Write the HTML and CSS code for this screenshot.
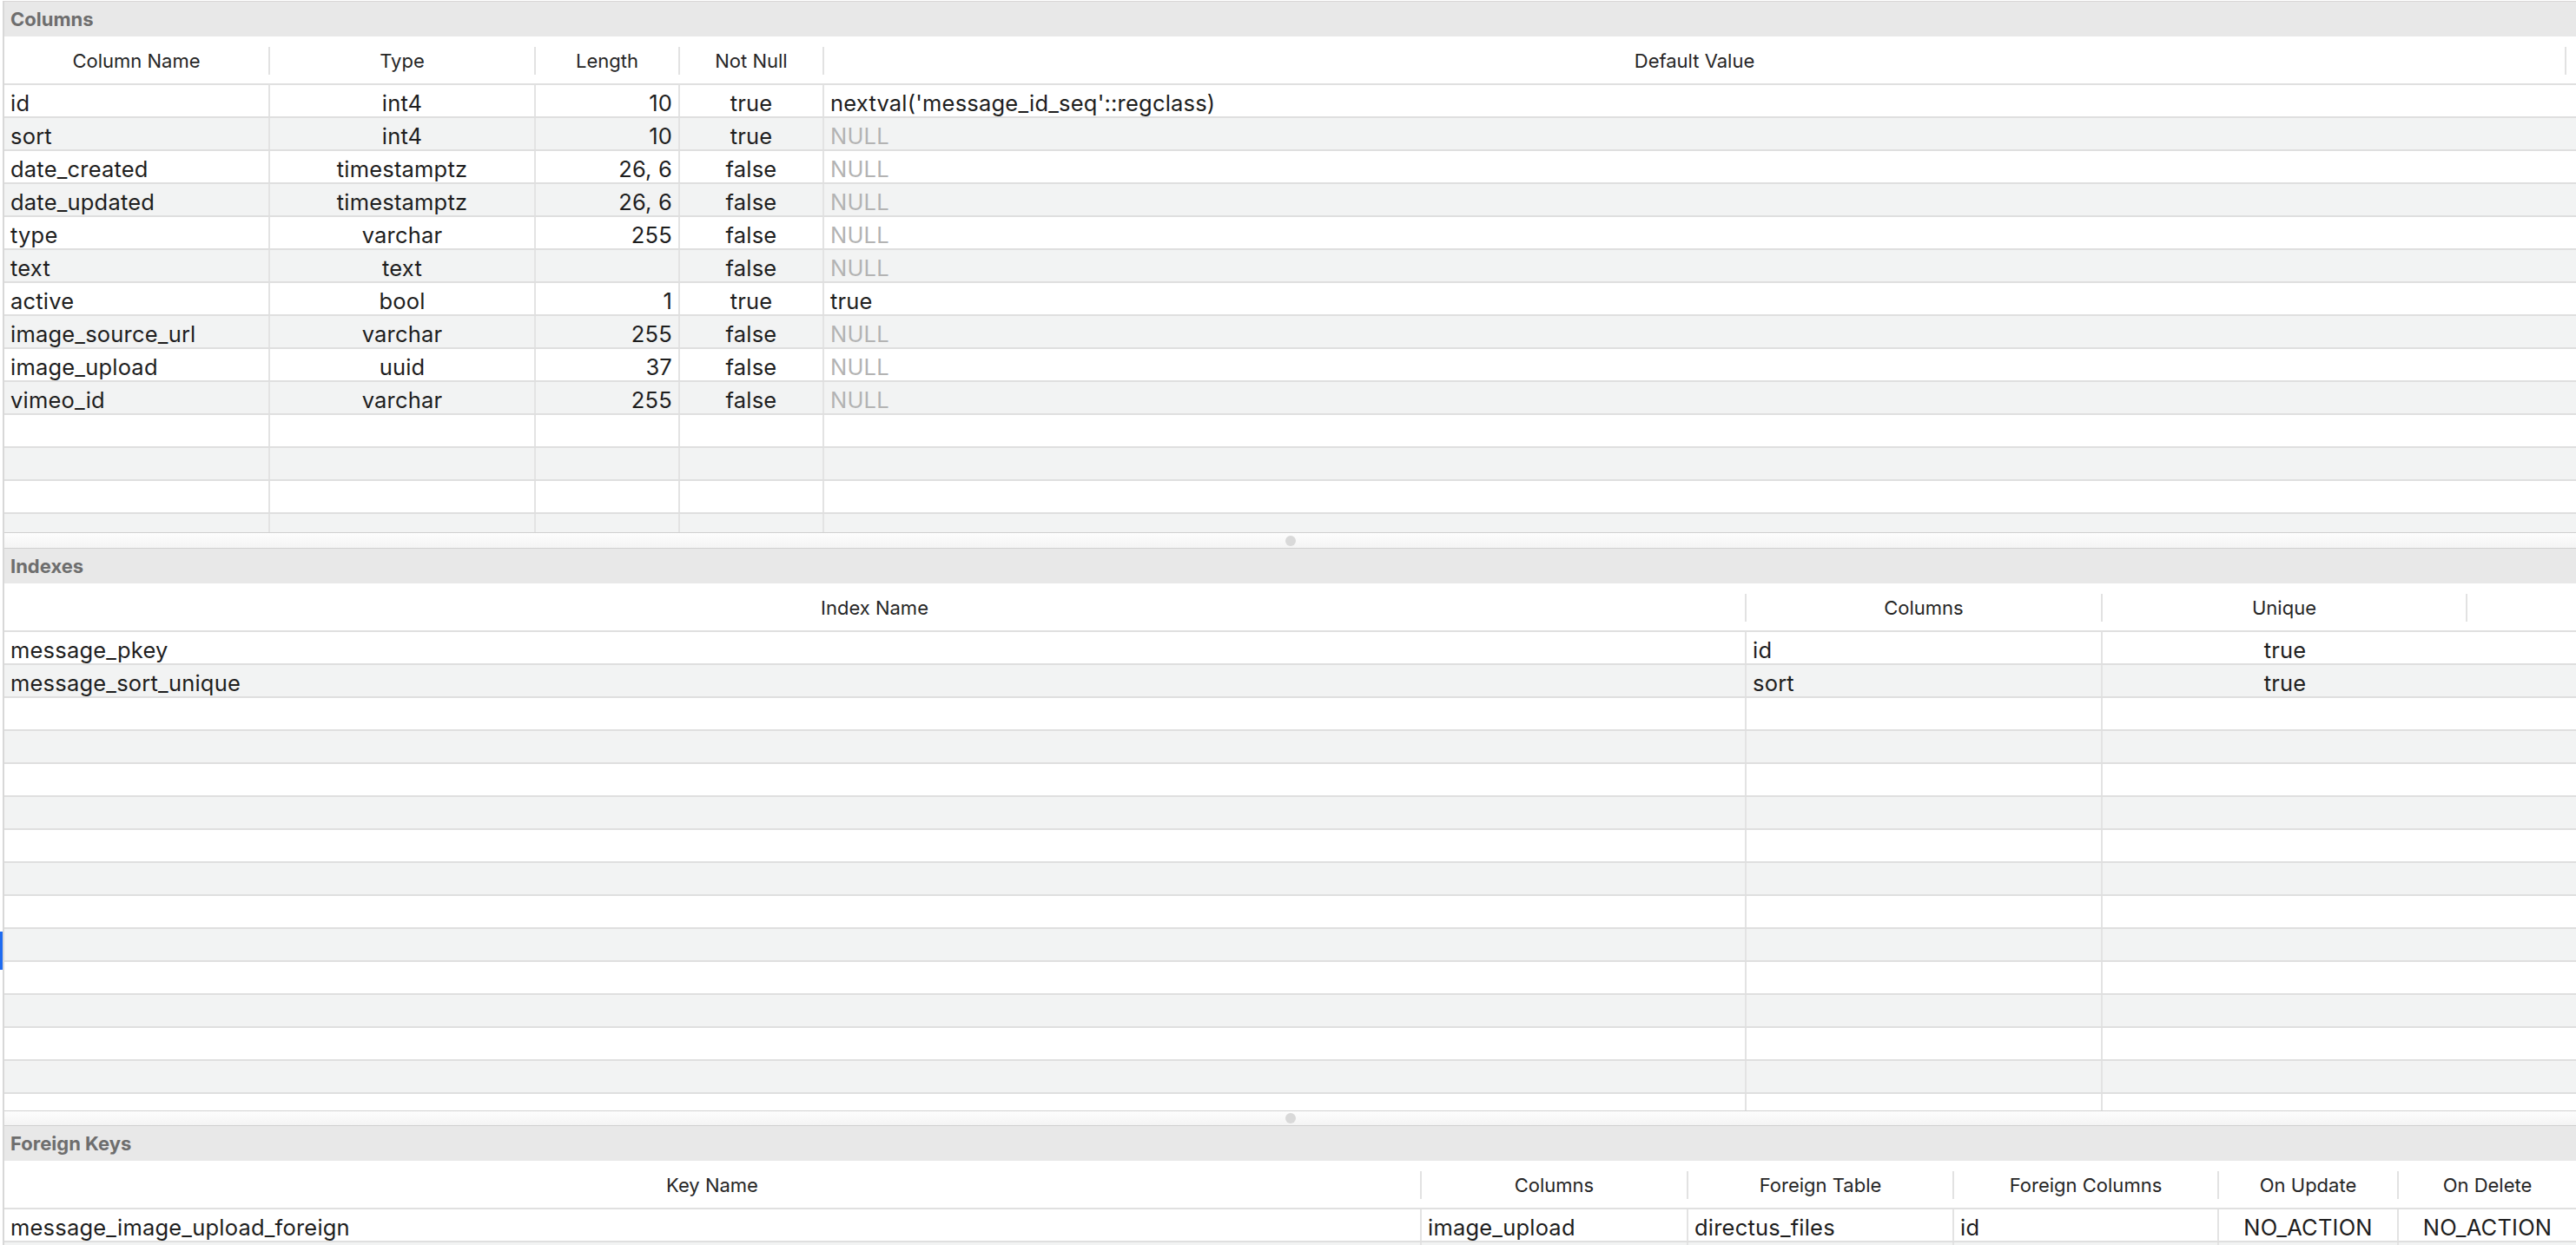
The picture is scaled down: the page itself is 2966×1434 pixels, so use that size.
FILE: index.html
```html
<!DOCTYPE html>
<html lang="en">
<head>
<meta charset="utf-8">
<title>message — Structure</title>
<link rel="stylesheet" href="styles.css">
</head>
<body>
<div class="caret"></div>
<div class="window">

  <section class="pane">
    <div class="pane-title">Columns</div>
    <div class="grid grid-columns">
      <div class="hrow">
        <div class="hc cw1">Column Name</div>
        <div class="hc cw2">Type</div>
        <div class="hc cw3">Length</div>
        <div class="hc cw4">Not Null</div>
        <div class="hc cw5">Default Value</div>
        <div class="hfill"></div>
      </div>
      <div class="rows">
        <div class="row"><div class="c cw1">id</div><div class="c cw2 ctr">int4</div><div class="c cw3 rgt">10</div><div class="c cw4 ctr">true</div><div class="c fill">nextval('message_id_seq'::regclass)</div></div>
        <div class="row"><div class="c cw1">sort</div><div class="c cw2 ctr">int4</div><div class="c cw3 rgt">10</div><div class="c cw4 ctr">true</div><div class="c fill null">NULL</div></div>
        <div class="row"><div class="c cw1">date_created</div><div class="c cw2 ctr">timestamptz</div><div class="c cw3 rgt">26, 6</div><div class="c cw4 ctr">false</div><div class="c fill null">NULL</div></div>
        <div class="row"><div class="c cw1">date_updated</div><div class="c cw2 ctr">timestamptz</div><div class="c cw3 rgt">26, 6</div><div class="c cw4 ctr">false</div><div class="c fill null">NULL</div></div>
        <div class="row"><div class="c cw1">type</div><div class="c cw2 ctr">varchar</div><div class="c cw3 rgt">255</div><div class="c cw4 ctr">false</div><div class="c fill null">NULL</div></div>
        <div class="row"><div class="c cw1">text</div><div class="c cw2 ctr">text</div><div class="c cw3 rgt"></div><div class="c cw4 ctr">false</div><div class="c fill null">NULL</div></div>
        <div class="row"><div class="c cw1">active</div><div class="c cw2 ctr">bool</div><div class="c cw3 rgt">1</div><div class="c cw4 ctr">true</div><div class="c fill">true</div></div>
        <div class="row"><div class="c cw1">image_source_url</div><div class="c cw2 ctr">varchar</div><div class="c cw3 rgt">255</div><div class="c cw4 ctr">false</div><div class="c fill null">NULL</div></div>
        <div class="row"><div class="c cw1">image_upload</div><div class="c cw2 ctr">uuid</div><div class="c cw3 rgt">37</div><div class="c cw4 ctr">false</div><div class="c fill null">NULL</div></div>
        <div class="row"><div class="c cw1">vimeo_id</div><div class="c cw2 ctr">varchar</div><div class="c cw3 rgt">255</div><div class="c cw4 ctr">false</div><div class="c fill null">NULL</div></div>
        <div class="row"><div class="c cw1"></div><div class="c cw2"></div><div class="c cw3"></div><div class="c cw4"></div><div class="c fill"></div></div>
        <div class="row"><div class="c cw1"></div><div class="c cw2"></div><div class="c cw3"></div><div class="c cw4"></div><div class="c fill"></div></div>
        <div class="row"><div class="c cw1"></div><div class="c cw2"></div><div class="c cw3"></div><div class="c cw4"></div><div class="c fill"></div></div>
        <div class="row"><div class="c cw1"></div><div class="c cw2"></div><div class="c cw3"></div><div class="c cw4"></div><div class="c fill"></div></div>
        <div class="row"><div class="c cw1"></div><div class="c cw2"></div><div class="c cw3"></div><div class="c cw4"></div><div class="c fill"></div></div>
      </div>
    </div>
  </section>

  <div class="splitter"><span class="knob"></span></div>

  <section class="pane">
    <div class="pane-title">Indexes</div>
    <div class="grid grid-indexes">
      <div class="hrow">
        <div class="hc iw1">Index Name</div>
        <div class="hc iw2">Columns</div>
        <div class="hc iw3">Unique</div>
        <div class="hfill"></div>
      </div>
      <div class="rows">
        <div class="row"><div class="c iw1">message_pkey</div><div class="c iw2">id</div><div class="c fill ctr iu">true</div></div>
        <div class="row"><div class="c iw1">message_sort_unique</div><div class="c iw2">sort</div><div class="c fill ctr iu">true</div></div>
        <div class="row"><div class="c iw1"></div><div class="c iw2"></div><div class="c fill"></div></div>
        <div class="row"><div class="c iw1"></div><div class="c iw2"></div><div class="c fill"></div></div>
        <div class="row"><div class="c iw1"></div><div class="c iw2"></div><div class="c fill"></div></div>
        <div class="row"><div class="c iw1"></div><div class="c iw2"></div><div class="c fill"></div></div>
        <div class="row"><div class="c iw1"></div><div class="c iw2"></div><div class="c fill"></div></div>
        <div class="row"><div class="c iw1"></div><div class="c iw2"></div><div class="c fill"></div></div>
        <div class="row"><div class="c iw1"></div><div class="c iw2"></div><div class="c fill"></div></div>
        <div class="row"><div class="c iw1"></div><div class="c iw2"></div><div class="c fill"></div></div>
        <div class="row"><div class="c iw1"></div><div class="c iw2"></div><div class="c fill"></div></div>
        <div class="row"><div class="c iw1"></div><div class="c iw2"></div><div class="c fill"></div></div>
        <div class="row"><div class="c iw1"></div><div class="c iw2"></div><div class="c fill"></div></div>
        <div class="row"><div class="c iw1"></div><div class="c iw2"></div><div class="c fill"></div></div>
        <div class="row"><div class="c iw1"></div><div class="c iw2"></div><div class="c fill"></div></div>
        <div class="row"><div class="c iw1"></div><div class="c iw2"></div><div class="c fill"></div></div>
      </div>
    </div>
  </section>

  <div class="splitter splitter-b"><span class="knob"></span></div>

  <section class="pane">
    <div class="pane-title">Foreign Keys</div>
    <div class="grid grid-fk">
      <div class="hrow">
        <div class="hc fw1">Key Name</div>
        <div class="hc fw2">Columns</div>
        <div class="hc fw3">Foreign Table</div>
        <div class="hc fw4">Foreign Columns</div>
        <div class="hc fw5">On Update</div>
        <div class="hc hfill hlast">On Delete</div>
      </div>
      <div class="rows">
        <div class="row"><div class="c fw1">message_image_upload_foreign</div><div class="c fw2">image_upload</div><div class="c fw3">directus_files</div><div class="c fw4">id</div><div class="c fw5 ctr">NO_ACTION</div><div class="c fill ctr">NO_ACTION</div></div>
        <div class="row"><div class="c fw1"></div><div class="c fw2"></div><div class="c fw3"></div><div class="c fw4"></div><div class="c fw5"></div><div class="c fill"></div></div>
        <div class="row"><div class="c fw1"></div><div class="c fw2"></div><div class="c fw3"></div><div class="c fw4"></div><div class="c fw5"></div><div class="c fill"></div></div>
      </div>
    </div>
  </section>

</div>
</body>
</html>
```

FILE: styles.css
```css
* { box-sizing: border-box; }

html, body {
  margin: 0;
  padding: 0;
  background: #ffffff;
  overflow: hidden;
}

body {
  font-family: Inter, "Liberation Sans", Arial, sans-serif;
  color: #1e1e1e;
  width: 2966px;
  height: 1434px;
  position: relative;
}

.caret {
  position: absolute;
  left: 0;
  top: 1073px;
  width: 3px;
  height: 44px;
  background: #1f6bf0;
}

.window {
  margin-top: 1px;
  margin-left: 3px;
  border-top: 1px solid #d9d5d5;
  border-left: 2px solid #d8d8d8;
  display: flex;
  flex-direction: column;
}

.pane-title {
  height: 40px;
  line-height: 40px;
  padding-left: 7px;
  background: #e8e8e8;
  color: #6e6e6e;
  font-weight: 700;
  font-size: 22px;
}

.grid {
  overflow: hidden;
  background: #ffffff;
}
.grid-columns { height: 571px; }
.grid-indexes { height: 607px; }
.grid-fk { height: 97px; }

.hrow {
  display: flex;
  height: 56px;
  border-bottom: 2px solid #e0e0e0;
  font-size: 22px;
  color: #262626;
}

.hc {
  margin-top: 12px;
  height: 32px;
  line-height: 32px;
  text-align: center;
  border-right: 2px solid #e2e2e2;
  white-space: nowrap;
  flex: none;
}
.hfill { flex: 1; }
.hlast { border-right: none; }

.rows { display: flex; flex-direction: column; }

.row {
  display: flex;
  height: 38px;
  flex: none;
  border-bottom: 2px solid #dfdfdf;
  font-size: 25.5px;
  letter-spacing: 0.2px;
}
.row:nth-child(even) { background: #f2f3f3; }

.c {
  flex: none;
  height: 36px;
  padding: 6px 7px 0 7px;
  line-height: 30px;
  white-space: nowrap;
  overflow: hidden;
  border-right: 2px solid #e3e3e3;
}
.c.fill { flex: 1; border-right: none; }
.ctr { text-align: center; }
.rgt { text-align: right; }
.null { color: #b3b3b3; }

/* Columns table widths */
.cw1 { width: 306px; }
.cw2 { width: 306px; }
.cw3 { width: 166px; }
.cw4 { width: 166px; }
.cw5 { width: 2006px; }

/* Indexes table widths */
.iw1 { width: 2006px; }
.iw2 { width: 410px; }
.iw3 { width: 420px; }
.iu { max-width: 420px; }

/* Foreign keys table widths */
.fw1 { width: 1632px; }
.fw2 { width: 307px; }
.fw3 { width: 306px; }
.fw4 { width: 305px; }
.fw5 { width: 207px; }

.splitter {
  height: 19px;
  border-top: 1px solid #d0d0d0;
  border-bottom: 1px solid #d0d0d0;
  background: linear-gradient(#fdfdfd, #f4f4f4);
  display: flex;
  align-items: center;
  justify-content: center;
}
.splitter-b { height: 18px; }

.knob {
  width: 12px;
  height: 12px;
  border-radius: 50%;
  background: #d9d9d9;
}
```
